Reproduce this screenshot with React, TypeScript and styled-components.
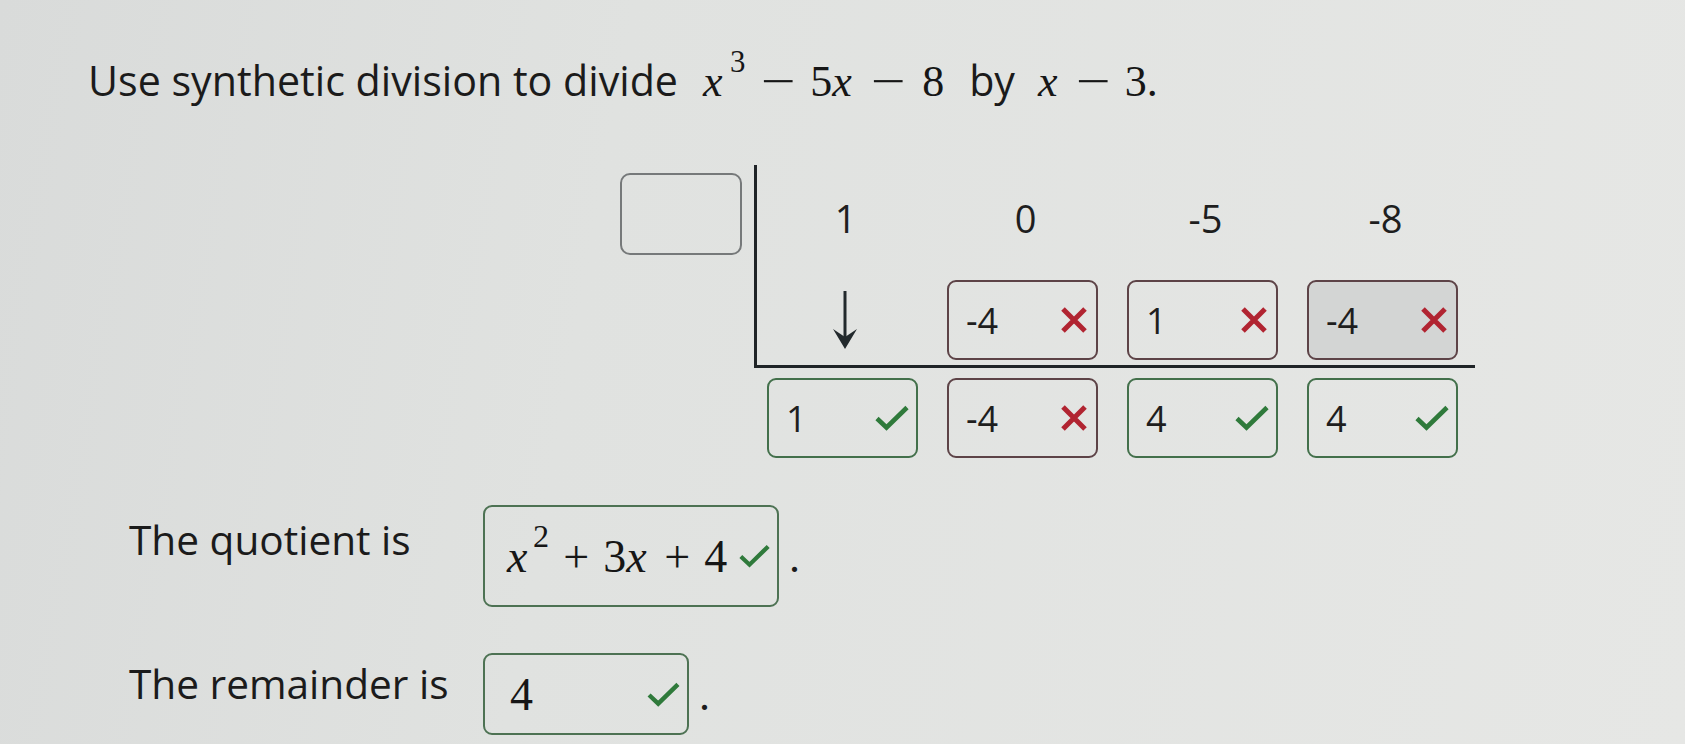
import React from "react";
import styled, { createGlobalStyle } from "styled-components";

const GlobalStyle = createGlobalStyle`
  html, body { margin: 0; padding: 0; height: 100%; }
  body {
    background: linear-gradient(100deg, #d9dbda 0%, #e0e2e0 35%, #e6e7e5 100%);
    font-family: "Open Sans", "Noto Sans", "Liberation Sans", sans-serif;
    font-weight: 500;
    color: #1b1b1b;
    overflow: hidden;
  }
`;

const Page = styled.main`
  display: flex;
  flex-direction: column;
  align-items: flex-start;
  padding: 50px 0 0 88px;
  min-height: 744px;
  box-sizing: border-box;
`;

const Title = styled.h1`
  margin: 0;
  font-weight: 500;
  font-size: 41.2px;
  line-height: 60px;
  height: 60px;
  white-space: nowrap;
  color: #1b1b1b;
`;

const MathExpr = styled.span<{ $size: number; $ml?: number }>`
  font-family: "Liberation Serif", "DejaVu Serif", serif;
  font-weight: 400;
  font-size: ${(p) => p.$size}px;
  margin-left: ${(p) => p.$ml ?? 0}px;
  color: #161616;
  white-space: nowrap;
`;

const Var = styled.i`
  font-style: italic;
  margin-right: 0.08em;
`;

const Sup = styled.sup<{ $ml: number }>`
  font-size: 0.7em;
  line-height: 0;
  vertical-align: 0.77em;
  margin-left: ${(p) => p.$ml}px;
`;

const Op = styled.span<{ $l: number; $r: number; $sx?: number }>`
  display: inline-block;
  margin: 0 ${(p) => p.$r}px 0 ${(p) => p.$l}px;
  transform: scaleX(${(p) => p.$sx ?? 1});
`;

const Word = styled.span<{ $ml: number; $mr: number }>`
  margin: 0 ${(p) => p.$mr}px 0 ${(p) => p.$ml}px;
`;

/* ---------- synthetic division ---------- */

const Division = styled.section`
  display: flex;
  align-items: flex-start;
  margin: 55px 0 0 532px;
`;

const DivisorSlot = styled.div`
  box-sizing: border-box;
  width: 122px;
  height: 82px;
  margin: 8px 12px 0 0;
  border: 2px solid #76797a;
  border-radius: 10px;
`;

const Work = styled.div`
  display: flex;
  flex-direction: column;
`;

const Bracket = styled.div`
  border-left: 3px solid #1f2427;
  border-bottom: 3px solid #1f2427;
  padding: 23px 17px 5px 10px;
`;

const Row = styled.div<{ $h: number; $mt?: number; $pl?: number }>`
  display: grid;
  grid-template-columns: repeat(4, 151px);
  column-gap: 29px;
  align-items: center;
  height: ${(p) => p.$h}px;
  margin-top: ${(p) => p.$mt ?? 0}px;
  padding-left: ${(p) => p.$pl ?? 0}px;
`;

const Coef = styled.span`
  text-align: center;
  padding-left: 6px;
  font-size: 38px;
  color: #1e1e1e;
`;

const ArrowSlot = styled.div`
  display: flex;
  justify-content: center;
  padding-left: 4px;
`;

type Tone = "neutral" | "wrong" | "right";

const toneBorder: Record<Tone, string> = {
  neutral: "#76797a",
  wrong: "#5d4347",
  right: "#43704b",
};

const Cell = styled.div<{ $tone: Tone; $filled?: boolean }>`
  box-sizing: border-box;
  height: 80px;
  display: flex;
  align-items: center;
  justify-content: space-between;
  padding: 0 7px 0 17px;
  border: 2px solid ${(p) => toneBorder[p.$tone]};
  border-radius: 9px;
  background: ${(p) => (p.$filled ? "#d3d5d4" : "transparent")};
  font-size: 36px;
  color: #1e1e1e;
`;

/* ---------- answers ---------- */

const Answers = styled.section`
  display: grid;
  grid-template-columns: 354px auto;
  row-gap: 46px;
  align-items: center;
  margin: 47px 0 0 41px;
`;

const Label = styled.span<{ $lift: number }>`
  font-size: 40.6px;
  white-space: nowrap;
  margin-bottom: ${(p) => p.$lift}px;
  color: #1b1b1b;
`;

const BoxWrap = styled.div`
  display: flex;
  align-items: baseline;
  gap: 10px;
`;

const AnswerBox = styled.div<{ $w: number; $h: number; $pl: number }>`
  box-sizing: border-box;
  width: ${(p) => p.$w}px;
  height: ${(p) => p.$h}px;
  display: flex;
  align-items: center;
  padding: 0 7px 0 ${(p) => p.$pl}px;
  border: 2px solid #4d7253;
  border-radius: 9px;
`;

const IconPush = styled.span`
  margin-left: auto;
  display: flex;
  align-items: center;
`;

const Period = styled.span`
  font-family: "Liberation Serif", "DejaVu Serif", serif;
  font-size: 44px;
  color: #1b1b1b;
`;

/* ---------- icons ---------- */

const CrossIcon = () => (
  <svg width="30" height="28" viewBox="0 0 30 28" aria-hidden>
    <path d="M4 3 L26 25 M26 3 L4 25" stroke="#b12431" strokeWidth="5" fill="none" />
  </svg>
);

const CheckIcon = ({ w = 34, h = 26 }: { w?: number; h?: number }) => (
  <svg width={w} height={h} viewBox="0 0 34 26" aria-hidden>
    <path
      d="M2 13.5 L11.5 22.5 L32 2.5"
      stroke="#2f7a3b"
      strokeWidth="4.6"
      fill="none"
      strokeLinejoin="miter"
    />
  </svg>
);

const DownArrow = () => (
  <svg width="28" height="58" viewBox="0 0 28 58" aria-hidden>
    <line x1="14" y1="0" x2="14" y2="48" stroke="#22292c" strokeWidth="3" />
    <path d="M2 38 L14 58 L26 38 L14 46 Z" fill="#22292c" />
  </svg>
);

const Mark = ({ tone }: { tone: Tone }) =>
  tone === "wrong" ? <CrossIcon /> : tone === "right" ? <CheckIcon /> : null;

type Entry = { value: string; tone: Tone; filled?: boolean };

const products: Entry[] = [
  { value: "-4", tone: "wrong" },
  { value: "1", tone: "wrong" },
  { value: "-4", tone: "wrong", filled: true },
];

const results: Entry[] = [
  { value: "1", tone: "right" },
  { value: "-4", tone: "wrong" },
  { value: "4", tone: "right" },
  { value: "4", tone: "right" },
];

const coefficients = ["1", "0", "-5", "-8"];

export default function App() {
  return (
    <>
      <GlobalStyle />
      <Page>
        <Title>
          Use synthetic division to divide
          <MathExpr $size={44} $ml={25}>
            <Var>x</Var>
            <Sup $ml={4}>3</Sup>
            <Op $l={21} $r={19} $sx={1.4}>−</Op>5<Var>x</Var>
            <Op $l={21} $r={21} $sx={1.4}>−</Op>8
          </MathExpr>
          <Word $ml={25} $mr={23}>by</Word>
          <MathExpr $size={44}>
            <Var>x</Var>
            <Op $l={20} $r={19} $sx={1.4}>−</Op>3.
          </MathExpr>
        </Title>

        <Division>
          <DivisorSlot />
          <Work>
            <Bracket>
              <Row $h={60}>
                {coefficients.map((c, i) => (
                  <Coef key={i}>{c}</Coef>
                ))}
              </Row>
              <Row $h={80} $mt={32}>
                <ArrowSlot>
                  <DownArrow />
                </ArrowSlot>
                {products.map((e, i) => (
                  <Cell key={i} $tone={e.tone} $filled={e.filled}>
                    <span>{e.value}</span>
                    <Mark tone={e.tone} />
                  </Cell>
                ))}
              </Row>
            </Bracket>
            <Row $h={80} $mt={10} $pl={13}>
              {results.map((e, i) => (
                <Cell key={i} $tone={e.tone}>
                  <span>{e.value}</span>
                  <Mark tone={e.tone} />
                </Cell>
              ))}
            </Row>
          </Work>
        </Division>

        <Answers>
          <Label $lift={34}>The quotient is</Label>
          <BoxWrap>
            <AnswerBox $w={296} $h={102} $pl={22}>
              <MathExpr $size={46}>
                <Var>x</Var>
                <Sup $ml={2}>2</Sup>
                <Op $l={14} $r={14}>+</Op>3<Var>x</Var>
                <Op $l={14} $r={14}>+</Op>4
              </MathExpr>
              <IconPush>
                <CheckIcon w={31} h={24} />
              </IconPush>
            </AnswerBox>
            <Period>.</Period>
          </BoxWrap>

          <Label $lift={22}>The remainder is</Label>
          <BoxWrap>
            <AnswerBox $w={206} $h={82} $pl={25}>
              <MathExpr $size={46}>4</MathExpr>
              <IconPush>
                <CheckIcon w={33} h={25} />
              </IconPush>
            </AnswerBox>
            <Period>.</Period>
          </BoxWrap>
        </Answers>
      </Page>
    </>
  );
}
